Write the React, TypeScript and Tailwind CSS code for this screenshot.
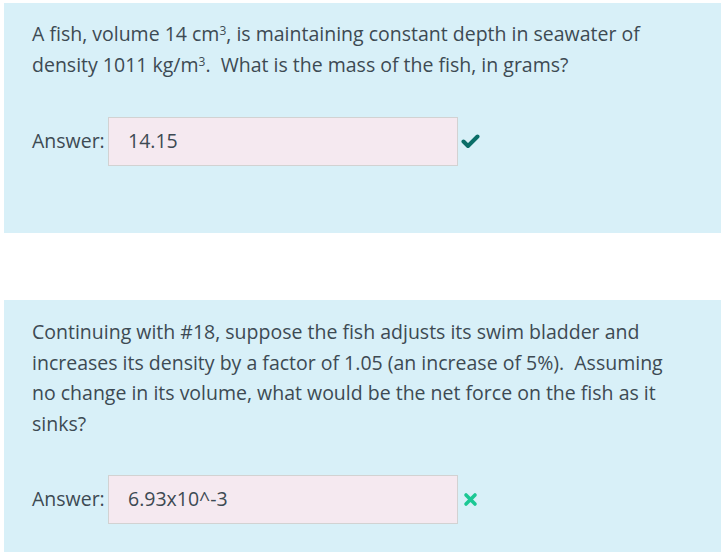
function AnswerRow({ value, correct }: { value: string; correct: boolean }) {
  return (
    <div className="flex items-center">
      <span className="w-[76px] shrink-0">Answer:</span>
      <div className="flex h-[49px] w-[350px] items-center border border-[#d2d2d2] bg-[#f5e9f0] pl-[19px]">
        {value}
      </div>
      {correct ? (
        <svg viewBox="0 0 19 15" className="ml-[3px] h-[15px] w-[19px]" aria-hidden>
          <polyline points="2.5,7.5 7,12 16.5,2.5" fill="none" stroke="#0b6e68" strokeWidth="4" strokeLinecap="round" strokeLinejoin="round" />
        </svg>
      ) : (
        <svg viewBox="0 0 15 15" className="ml-[5px] h-[15px] w-[15px]" aria-hidden>
          <path d="M3 3 L12 12 M12 3 L3 12" fill="none" stroke="#1cc894" strokeWidth="3.6" strokeLinecap="round" />
        </svg>
      )}
    </div>
  );
}

export default function App() {
  return (
    <div
      className="min-h-[552px] bg-white pl-[4px] pt-[3px] text-[19.5px] leading-[30.5px] text-[#3d4a53]"
      style={{ fontFamily: '"Open Sans", "Noto Sans", sans-serif' }}
    >
      <section className="h-[230px] bg-[#d8f0f8] pl-[28px] pt-[16px]">
        <p>
          A fish, volume 14 cm<sup className="text-[12px]">3</sup>, is maintaining constant depth in seawater of
          <br />
          density 1011 kg/m<sup className="text-[12px]">3</sup>.&nbsp; What is the mass of the fish, in grams?
        </p>
        <div className="mt-[37px]">
          <AnswerRow value="14.15" correct />
        </div>
      </section>

      <section className="mt-[67px] h-[252px] bg-[#d8f0f8] pl-[28px] pt-[17px]">
        <p>
          Continuing with #18, suppose the fish adjusts its swim bladder and
          <br />
          increases its density by a factor of 1.05 (an increase of 5%).&nbsp; Assuming
          <br />
          no change in its volume, what would be the net force on the fish as it
          <br />
          sinks?
        </p>
        <div className="mt-[36px]">
          <AnswerRow value="6.93x10^-3" correct={false} />
        </div>
      </section>
    </div>
  );
}
